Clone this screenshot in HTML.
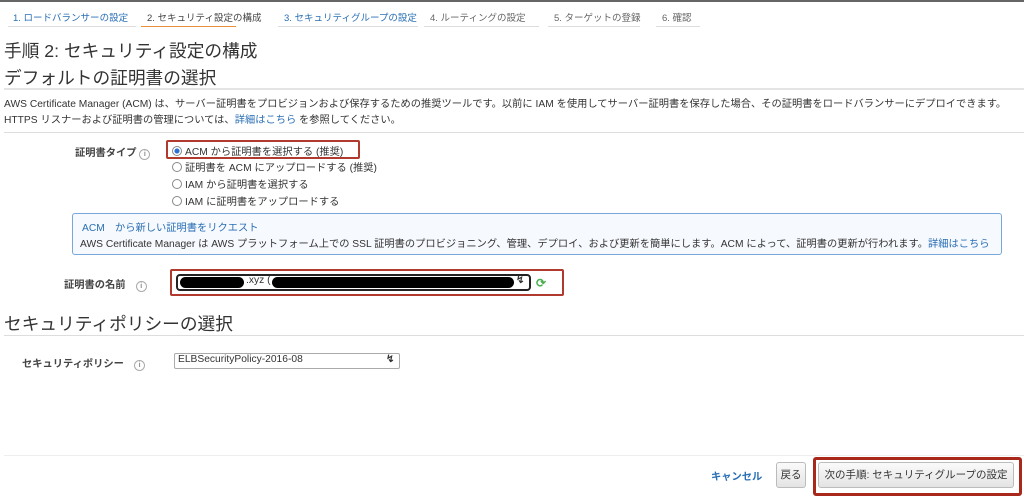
<html><head><style>
body{margin:0;width:1024px;height:501px;background:#fff;font-family:"Liberation Sans","Noto Sans CJK JP",sans-serif;color:#333;position:relative;overflow:hidden}
.a{position:absolute;white-space:nowrap}
.tab{position:absolute;top:10px;font-size:9.5px;color:#666;height:17px;border-bottom:1px solid #ddd;white-space:nowrap;box-sizing:border-box}
.blue{color:#2a6fb5}
.h{font-size:17.7px;color:#333}
.s{font-size:10.25px}
.rad{display:inline-block;width:8px;height:8px;border:1px solid #888;border-radius:50%;margin-right:3px;vertical-align:-1px;background:#fff}
.info{display:inline-block;width:9px;height:9px;border:1px solid #aaa;border-radius:50%;font-size:7px;text-align:center;line-height:9px;color:#888}
.btn{position:absolute;border:1px solid #bbb;border-radius:3px;background:linear-gradient(#fafafa,#e4e4e4);font-size:10.5px;text-align:center;white-space:nowrap}
</style></head><body>
<div style="position:absolute;top:0;left:0;width:1024px;height:2px;background:#666"></div>
<div class="tab blue" style="left:8px;width:128px;padding-left:5px">1. ロードバランサーの設定</div>
<div class="tab" style="left:141px;width:95px;padding-left:6px;border-bottom:1px solid #e8913a;color:#444">2. セキュリティ設定の構成</div>
<div class="tab blue" style="left:278px;width:140px;padding-left:6px">3. セキュリティグループの設定</div>
<div class="tab" style="left:424px;width:115px;padding-left:6px">4. ルーティングの設定</div>
<div class="tab" style="left:548px;width:92px;padding-left:6px">5. ターゲットの登録</div>
<div class="tab" style="left:656px;width:44px;padding-left:6px">6. 確認</div>
<div class="a h" style="left:4px;top:37px">手順 2: セキュリティ設定の構成</div>
<div class="a h" style="left:4px;top:64px">デフォルトの証明書の選択</div>
<div style="position:absolute;left:4px;top:88px;width:1020px;height:2px;background:#e4e4e4"></div>
<div class="a s" style="left:4px;top:95px">AWS Certificate Manager (ACM) は、サーバー証明書をプロビジョンおよび保存するための推奨ツールです。以前に IAM を使用してサーバー証明書を保存した場合、その証明書をロードバランサーにデプロイできます。</div>
<div class="a s" style="left:4px;top:111px">HTTPS リスナーおよび証明書の管理については、<span class="blue">詳細はこちら</span> を参照してください。</div>
<div style="position:absolute;left:4px;top:132px;width:1020px;height:1px;background:#ddd"></div>
<div class="a s" style="left:75px;top:144px;font-weight:bold;color:#444">証明書タイプ <span class="info">i</span></div>
<div style="position:absolute;left:166px;top:140px;width:190px;height:15px;border:2px solid #b03a2e;border-radius:2px"></div>
<div class="a s" style="left:172px;top:143px"><span class="rad" style="background:radial-gradient(#2a6fd5 40%,#fff 50%)"></span>ACM から証明書を選択する (推奨)</div>
<div class="a s" style="left:172px;top:159px"><span class="rad"></span>証明書を ACM にアップロードする (推奨)</div>
<div class="a s" style="left:172px;top:176px"><span class="rad"></span>IAM から証明書を選択する</div>
<div class="a s" style="left:172px;top:193px"><span class="rad"></span>IAM に証明書をアップロードする</div>
<div style="position:absolute;left:72px;top:213px;width:928px;height:40px;border:1px solid #7aa7db;border-radius:3px;background:#f6f9fd"></div>
<div class="a s blue" style="left:82px;top:219px">ACM　から新しい証明書をリクエスト</div>
<div class="a s" style="left:80px;top:235px">AWS Certificate Manager は AWS プラットフォーム上での SSL 証明書のプロビジョニング、管理、デプロイ、および更新を簡単にします。ACM によって、証明書の更新が行われます。<span class="blue">詳細はこちら</span></div>
<div class="a s" style="left:64px;top:276px;font-weight:bold;color:#444">証明書の名前　<span class="info">i</span></div>
<div style="position:absolute;left:170px;top:269px;width:390px;height:23px;border:2px solid #b03a2e;border-radius:2px"></div>
<div style="position:absolute;left:176px;top:274px;width:351px;height:13px;border:2px solid #222;border-radius:4px;background:#fff"></div>
<div style="position:absolute;left:180px;top:277px;width:64px;height:11px;background:#000;border-radius:6px"></div>
<div class="a s" style="left:246px;top:275px">.xyz (</div>
<div style="position:absolute;left:272px;top:277px;width:242px;height:11px;background:#000;border-radius:6px"></div>
<div class="a" style="left:516px;top:275px;font-size:10px;font-weight:bold">↯</div>
<div class="a" style="left:536px;top:276px;font-size:12px;color:#4caf50;font-weight:bold">⟳</div>
<div class="a h" style="left:4px;top:310px">セキュリティポリシーの選択</div>
<div style="position:absolute;left:4px;top:335px;width:1020px;height:1px;background:#ddd"></div>
<div class="a s" style="left:22px;top:355px;font-weight:bold;color:#444">セキュリティポリシー　<span class="info">i</span></div>
<div style="position:absolute;left:174px;top:353px;width:224px;height:14px;border:1px solid #aaa;border-radius:2px;background:#fff"></div>
<div class="a s" style="left:178px;top:354px">ELBSecurityPolicy-2016-08</div>
<div class="a" style="left:386px;top:354px;font-size:10px;font-weight:bold">↯</div>
<div style="position:absolute;left:4px;top:455px;width:1020px;height:1px;background:#eee"></div>
<div class="a s blue" style="left:711px;top:468px;font-weight:bold">キャンセル</div>
<div class="btn" style="left:776px;top:462px;width:28px;height:24px;line-height:24px">戻る</div>
<div style="position:absolute;left:813px;top:457px;width:203px;height:33px;border:3px solid #a8291c;border-radius:3px"></div>
<div class="btn" style="left:818px;top:462px;width:194px;height:24px;line-height:24px">次の手順: セキュリティグループの設定</div>
</body></html>
